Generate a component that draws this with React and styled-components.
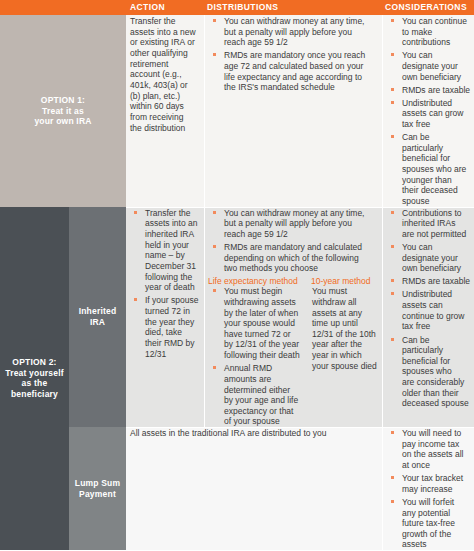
import React from "react";
import styled, { createGlobalStyle } from "styled-components";

const GlobalStyle = createGlobalStyle`
  * { box-sizing: border-box; }
  body {
    margin: 0;
    background: #fff;
    font-family: "Liberation Sans", Arial, sans-serif;
  }
`;

const ORANGE = "#f16c23";

const rows = {
  own: {
    action: "Transfer the\nassets into a new\nor existing IRA or\nother qualifying\nretirement\naccount (e.g.,\n401k, 403(a) or\n(b) plan, etc.)\nwithin 60 days\nfrom receiving\nthe distribution",
    distributions: [
      "You can withdraw money at any time,\nbut a penalty will apply before you\nreach age 59 1/2",
      "RMDs are mandatory once you reach\nage 72 and calculated based on your\nlife expectancy and age according to\nthe IRS's mandated schedule",
    ],
    considerations: [
      "You can continue\nto make\ncontributions",
      "You can\ndesignate your\nown beneficiary",
      "RMDs are taxable",
      "Undistributed\nassets can grow\ntax free",
      "Can be\nparticularly\nbeneficial for\nspouses who are\nyounger than\ntheir deceased\nspouse",
    ],
  },
  inherited: {
    action: [
      "Transfer the\nassets into an\ninherited IRA\nheld in your\nname – by\nDecember 31\nfollowing the\nyear of death",
      "If your spouse\nturned 72 in\nthe year they\ndied, take\ntheir RMD by\n12/31",
    ],
    distributions: [
      "You can withdraw money at any time,\nbut a penalty will apply before you\nreach age 59 1/2",
      "RMDs are mandatory and calculated\ndepending on which of the following\ntwo methods you choose",
    ],
    lifeExpectancy: [
      "You must begin\nwithdrawing assets\nby the later of when\nyour spouse would\nhave turned 72 or\nby 12/31 of the year\nfollowing their death",
      "Annual RMD\namounts are\ndetermined either\nby your age and life\nexpectancy or that\nof your spouse",
    ],
    tenYear: "You must\nwithdraw all\nassets at any\ntime up until\n12/31 of the 10th\nyear after the\nyear in which\nyour spouse died",
    considerations: [
      "Contributions to\ninherited IRAs\nare not permitted",
      "You can\ndesignate your\nown beneficiary",
      "RMDs are taxable",
      "Undistributed\nassets can\ncontinue to grow\ntax free",
      "Can be\nparticularly\nbeneficial for\nspouses who\nare considerably\nolder than their\ndeceased spouse",
    ],
  },
  lump: {
    action: "All assets in the traditional IRA are distributed to you",
    considerations: [
      "You will need to\npay income tax\non the assets all\nat once",
      "Your tax bracket\nmay increase",
      "You will forfeit\nany potential\nfuture tax-free\ngrowth of the\nassets",
    ],
  },
};

function Bullets({ items }) {
  return (
    <List>
      {items.map((text, i) => (
        <Item key={i}>{text}</Item>
      ))}
    </List>
  );
}

export default function App() {
  return (
    <>
      <GlobalStyle />
      <Table>
        <colgroup>
          <col style={{ width: 69 }} />
          <col style={{ width: 57 }} />
          <col style={{ width: 78 }} />
          <col style={{ width: 178 }} />
          <col style={{ width: 92 }} />
        </colgroup>
        <thead>
          <tr>
            <HeadCell colSpan={2} />
            <HeadCell $pad={4}>Action</HeadCell>
            <HeadCell>Distributions</HeadCell>
            <HeadCell>Considerations</HeadCell>
          </tr>
        </thead>
        <tbody>
          <tr>
            <Label colSpan={2} $bg="#beb6b0">
              {"OPTION 1:\nTreat it as\nyour own IRA"}
            </Label>
            <Cell $bg="#f5f4f2" $first>
              <Plain>{rows.own.action}</Plain>
            </Cell>
            <Cell $bg="#f5f4f2">
              <Bullets items={rows.own.distributions} />
            </Cell>
            <Cell $bg="#f6f5f3">
              <Bullets items={rows.own.considerations} />
            </Cell>
          </tr>
          <tr>
            <Label rowSpan={2} $bg="#4b5055">
              {"OPTION 2:\nTreat yourself\nas the\nbeneficiary"}
            </Label>
            <Label $bg="#6c7074">{"Inherited\nIRA"}</Label>
            <Cell $bg="#e4e4e3" $first $top>
              <Bullets items={rows.inherited.action} />
            </Cell>
            <Cell $bg="#e4e4e3" $top>
              <Bullets items={rows.inherited.distributions} />
              <Methods>
                <div>
                  <MethodTitle>Life expectancy method</MethodTitle>
                  <Bullets items={rows.inherited.lifeExpectancy} />
                </div>
                <div>
                  <MethodTitle>10-year method</MethodTitle>
                  <Plain>{rows.inherited.tenYear}</Plain>
                </div>
              </Methods>
            </Cell>
            <Cell $bg="#e4e4e3" $top>
              <Bullets items={rows.inherited.considerations} />
            </Cell>
          </tr>
          <tr>
            <Label $bg="#808486">{"Lump Sum\nPayment"}</Label>
            <Cell $bg="#f7f7f7" $first $top colSpan={2}>
              <Plain>{rows.lump.action}</Plain>
            </Cell>
            <Cell $bg="#f7f7f7" $top>
              <Bullets items={rows.lump.considerations} />
            </Cell>
          </tr>
        </tbody>
      </Table>
    </>
  );
}

const Table = styled.table`
  width: 474px;
  table-layout: fixed;
  border-collapse: separate;
  border-spacing: 0;
  font-size: 8.5px;
  line-height: 10.65px;
  color: #3b3b3b;
`;

const HeadCell = styled.th`
  height: 15px;
  padding: 0 0 0 ${(p) => p.$pad ?? 3}px;
  background: ${ORANGE};
  color: #fff;
  font-weight: bold;
  font-size: 8.5px;
  letter-spacing: 0.4px;
  text-transform: uppercase;
  text-align: left;
  vertical-align: middle;
  white-space: nowrap;
`;

const Label = styled.td`
  background: ${(p) => p.$bg};
  color: #fff;
  font-weight: bold;
  letter-spacing: 0.2px;
  text-align: center;
  vertical-align: middle;
  white-space: pre;
  padding: 0 2px;
`;

const Cell = styled.td`
  background: ${(p) => p.$bg};
  vertical-align: top;
  padding: ${(p) => (p.$top ? 0 : 1)}px 1px 0 3px;
  border-left: ${(p) => (p.$first ? "none" : "1px solid #fff")};
  border-top: ${(p) => (p.$top ? "1px solid #fff" : "none")};
`;

const Plain = styled.div`
  white-space: pre;
  padding-left: 1px;
`;

const List = styled.ul`
  list-style: none;
  margin: 0;
  padding: 0;
  display: flex;
  flex-direction: column;
  gap: 2.4px;
`;

const Item = styled.li`
  display: flex;
  white-space: pre;

  &::before {
    content: "";
    flex: none;
    width: 3px;
    height: 3px;
    margin: 3px 8px 0 5px;
    background: #f28a5c;
  }
`;

const Methods = styled.div`
  display: grid;
  grid-template-columns: 103px 1fr;
  margin-top: 1.5px;
`;

const MethodTitle = styled.div`
  color: ${ORANGE};
  white-space: nowrap;
`;
